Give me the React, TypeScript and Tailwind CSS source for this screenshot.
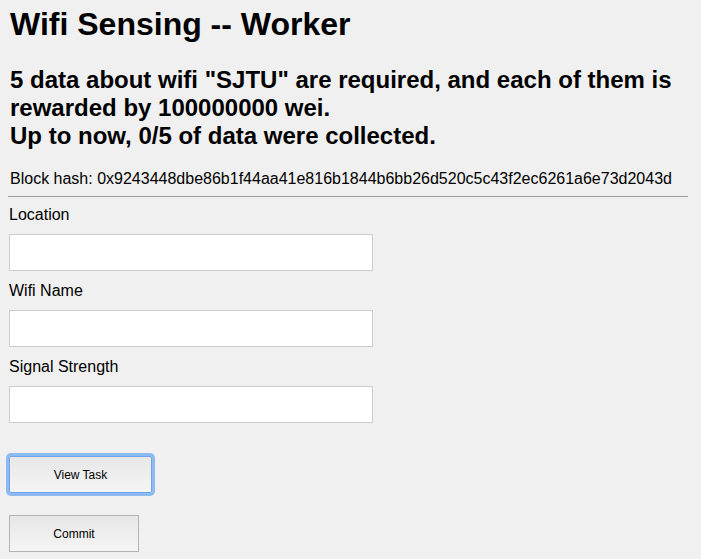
export default function App() {
  const fields = ["Location", "Wifi Name", "Signal Strength"]

  return (
    <div className="min-h-screen bg-[#f0f0f0] px-2 pt-[6px] font-['Liberation_Sans',Arial,sans-serif] text-black">
      <h1 className="pl-[2px] text-[32px] font-bold leading-[37px]">Wifi Sensing -- Worker</h1>

      <h2 className="mt-[23px] pl-[2px] text-[24px] font-bold leading-[28px]">
        5 data about wifi "SJTU" are required, and each of them is rewarded by 100000000 wei.
        <br />
        Up to now, 0/5 of data were collected.
      </h2>

      <p className="mt-[20px] pl-[2px] text-[16px] leading-[18px]">
        Block hash: 0x9243448dbe86b1f44aa41e816b1844b6bb26d520c5c43f2ec6261a6e73d2043d
      </p>

      <hr className="mt-[8px] w-[680px] border-0 border-t border-[#9c9c9c]" />

      <div className="mt-[9px] flex flex-col">
        {fields.map((label) => (
          <div key={label} className="flex flex-col">
            <label className="pl-[1px] text-[16px] leading-[18px]">{label}</label>
            <input
              type="text"
              className="mt-[10px] mb-[11px] ml-[1px] h-[37px] w-[364px] border border-[#cccccc] bg-white px-2 text-[16px] outline-none"
            />
          </div>
        ))}
      </div>

      <div className="mt-[22px] flex flex-col items-start gap-[22px] pl-[1px]">
        <button
          type="button"
          className="h-[37px] w-[143px] rounded-[2px] border border-[#6fa4ea] bg-gradient-to-b from-[#e7e7e7] to-[#f5f5f5] text-[12px] shadow-[0_0_0_3px_#8cbaf2]"
        >
          View Task
        </button>
        <button
          type="button"
          className="h-[37px] w-[130px] border border-[#b3b3b3] bg-gradient-to-b from-[#e7e7e7] to-[#f5f5f5] text-[12px]"
        >
          Commit
        </button>
      </div>
    </div>
  )
}
